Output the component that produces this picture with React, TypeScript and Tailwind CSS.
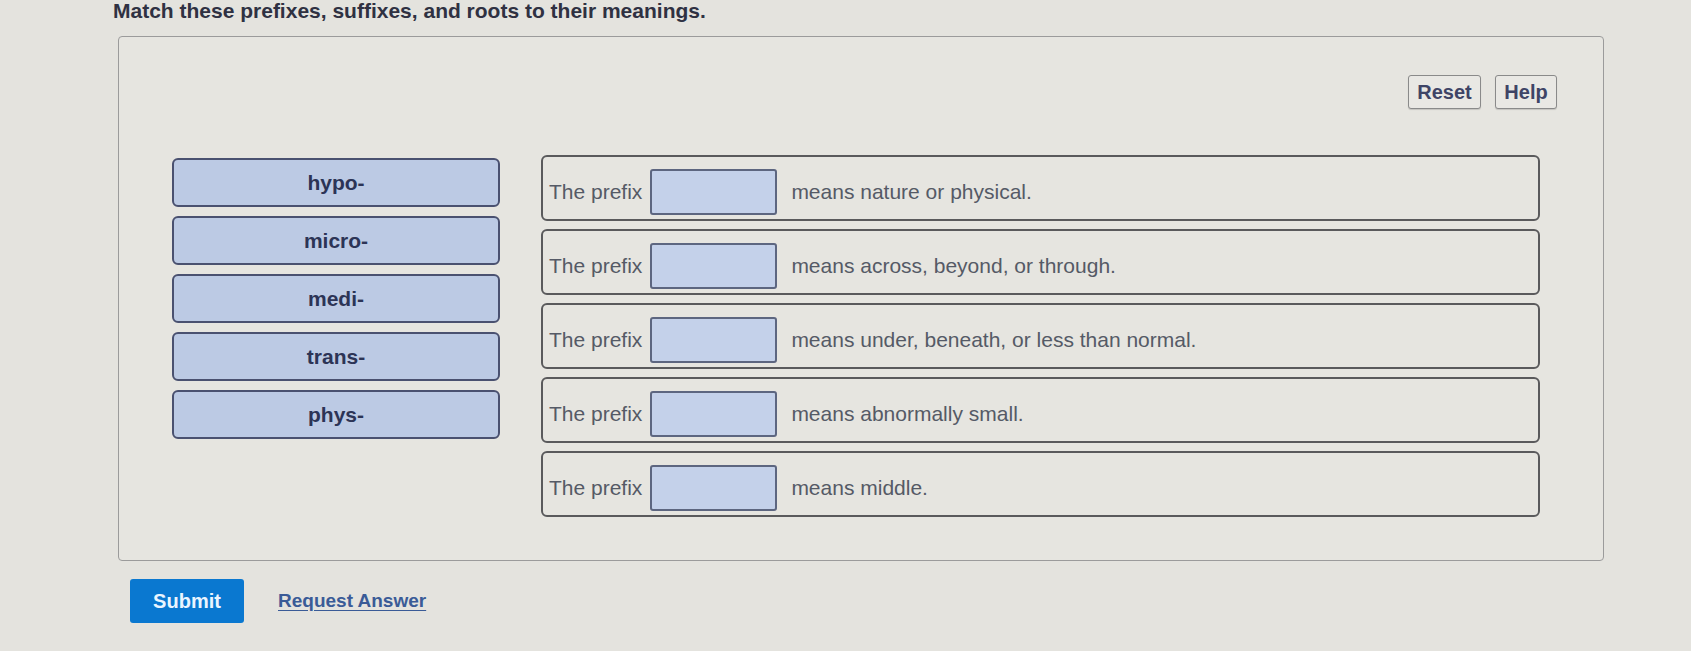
import React from 'react';

const tiles = ['hypo-', 'micro-', 'medi-', 'trans-', 'phys-'];

const meanings = [
  'means nature or physical.',
  'means across, beyond, or through.',
  'means under, beneath, or less than normal.',
  'means abnormally small.',
  'means middle.',
];

const App: React.FC = () => {
  return (
    <div className="w-[1691px] h-[651px] overflow-hidden bg-[#e4e3de] font-['Liberation_Sans',Arial,sans-serif]">
      <h1 className="pl-[113px] text-[21px] leading-[21px] font-bold text-[#2f3142]">
        Match these prefixes, suffixes, and roots to their meanings.
      </h1>

      <div className="ml-[118px] mt-[15px] w-[1486px] h-[525px] border border-[#9b9b9b] rounded-[4px] bg-[#e6e5e0]">
        <div className="flex justify-end gap-[14px] pt-[38px] pr-[46px]">
          <button className="h-[34px] w-[73px] border border-[#8a8a8a] rounded-[3px] bg-[#e9e8e4] text-[20px] font-bold text-[#3e4466] shadow-[0_1px_1px_rgba(0,0,0,0.15)]">
            Reset
          </button>
          <button className="h-[34px] w-[62px] border border-[#8a8a8a] rounded-[3px] bg-[#e9e8e4] text-[20px] font-bold text-[#3e4466] shadow-[0_1px_1px_rgba(0,0,0,0.15)]">
            Help
          </button>
        </div>

        <div className="flex gap-[41px] pl-[53px] mt-[46px]">
          <div className="flex flex-col gap-[9px] mt-[3px] w-[328px]">
            {tiles.map((t) => (
              <div
                key={t}
                className="h-[49px] flex items-center justify-center border-2 border-[#4a5170] rounded-[6px] bg-[#bccae4] text-[21px] font-bold text-[#2c3456]"
              >
                {t}
              </div>
            ))}
          </div>

          <div className="flex flex-col gap-[8px] w-[999px]">
            {meanings.map((m) => (
              <div
                key={m}
                className="h-[66px] flex items-center pl-[6px] pt-[8px] border-2 border-[#5a5a5c] rounded-[6px] text-[21px] text-[#555a66]"
              >
                <span>The prefix</span>
                <div className="ml-[8px] w-[127px] h-[46px] border-2 border-[#5d6680] rounded-[3px] bg-[#c4d1ea]" />
                <span className="ml-[14px]">{m}</span>
              </div>
            ))}
          </div>
        </div>
      </div>

      <div className="flex items-center mt-[18px] pl-[130px]">
        <button className="w-[114px] h-[44px] rounded-[3px] bg-[#0a78d0] text-[20px] font-bold text-[#eaf5ff]">
          Submit
        </button>
        <a className="ml-[34px] text-[19px] font-bold text-[#3a5b97] underline underline-offset-[3px]">
          Request Answer
        </a>
      </div>
    </div>
  );
};

export default App;
